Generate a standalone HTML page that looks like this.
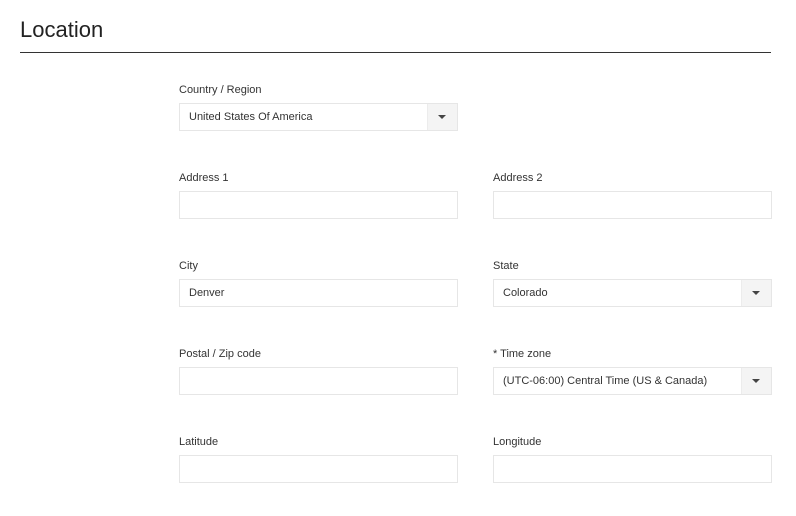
<html><head><style>
body{margin:0;background:#fff;font-family:"Liberation Sans",sans-serif;color:#333;width:796px;height:516px;position:relative;overflow:hidden}
.h{position:absolute;left:20px;top:17px;font-size:22px;color:#222}
.line{position:absolute;left:20px;top:52px;width:751px;height:1px;background:#333}
.l{position:absolute;font-size:11px;color:#333}
.f{position:absolute;width:277px;height:26px;border:1px solid #e6e6e6;background:#fff;box-sizing:content-box}
.f span{position:absolute;left:9px;top:7px;font-size:11px;color:#333}
.f b{position:absolute;right:0;top:0;width:29px;height:26px;background:#f4f4f4;border-left:1px solid #ececec}
.f b:after{content:"";position:absolute;left:10px;top:11px;border-left:4px solid transparent;border-right:4px solid transparent;border-top:4px solid #444}
</style></head><body>
<div class="h">Location</div><div class="line"></div>
<div class="l" style="left:179px;top:84px">Country / Region</div>
<div class="f" style="left:179px;top:103px"><span>United States Of America</span><b></b></div>
<div class="l" style="left:179px;top:172px">Address 1</div>
<div class="f" style="left:179px;top:191px"></div>
<div class="l" style="left:493px;top:172px">Address 2</div>
<div class="f" style="left:493px;top:191px"></div>
<div class="l" style="left:179px;top:260px">City</div>
<div class="f" style="left:179px;top:279px"><span>Denver</span></div>
<div class="l" style="left:493px;top:260px">State</div>
<div class="f" style="left:493px;top:279px"><span>Colorado</span><b></b></div>
<div class="l" style="left:179px;top:348px">Postal / Zip code</div>
<div class="f" style="left:179px;top:367px"></div>
<div class="l" style="left:493px;top:348px">* Time zone</div>
<div class="f" style="left:493px;top:367px"><span>(UTC-06:00) Central Time (US &amp; Canada)</span><b></b></div>
<div class="l" style="left:179px;top:436px">Latitude</div>
<div class="f" style="left:179px;top:455px"></div>
<div class="l" style="left:493px;top:436px">Longitude</div>
<div class="f" style="left:493px;top:455px"></div>
</body></html>
